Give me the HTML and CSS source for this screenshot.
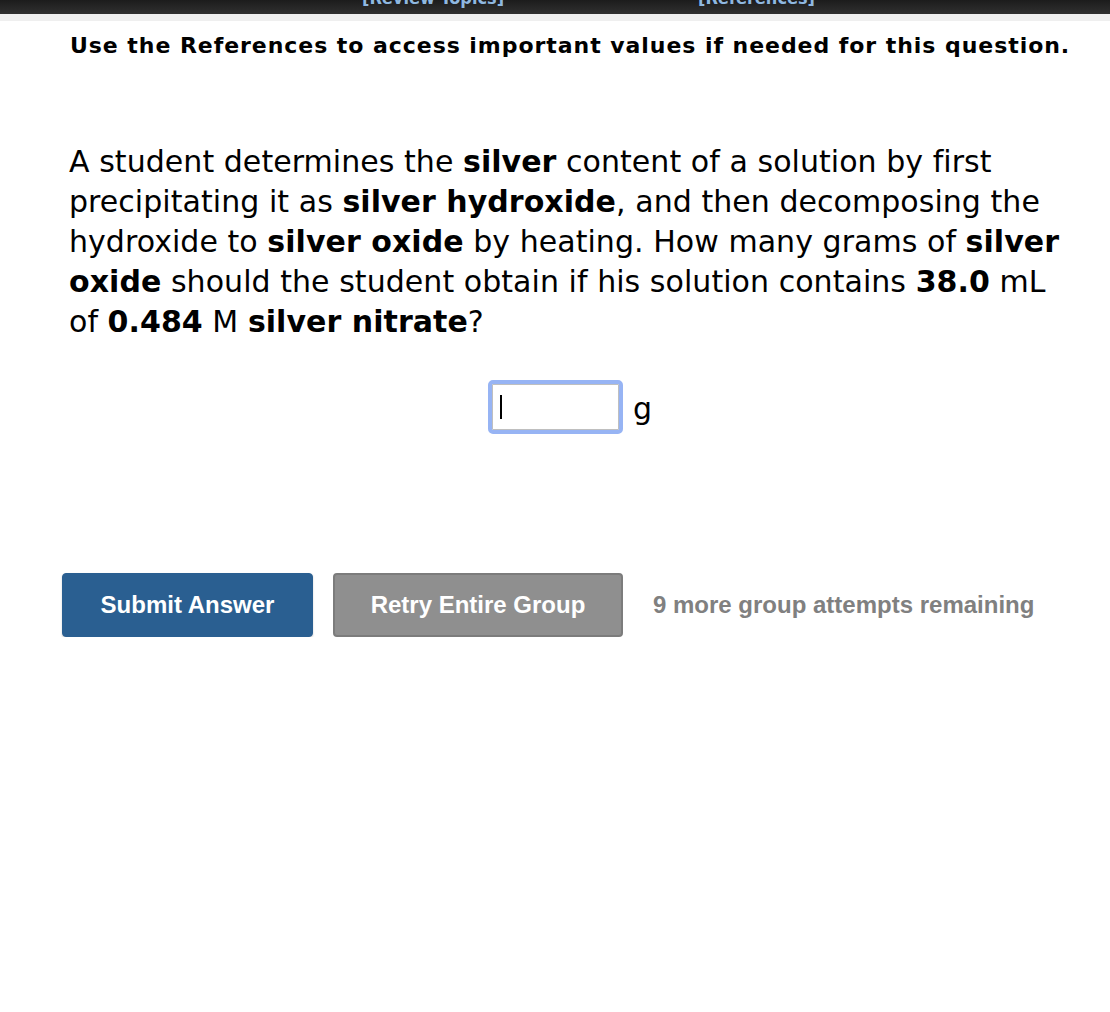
FILE: index.html
```html
<!DOCTYPE html>
<html>
<head>
<meta charset="utf-8">
<link rel="stylesheet" href="styles.css">
</head>
<body>
<div class="topbar">
  <span class="toplink link-review">[Review Topics]</span>
  <span class="toplink link-refs">[References]</span>
</div>
<div class="strip"></div>
<div class="content">
  <p class="note">Use the References to access important values if needed for this question.</p>
  <p class="question">A student determines the <b>silver</b> content of a solution by first<br>precipitating it as <b>silver hydroxide</b>, and then decomposing the<br>hydroxide to <b>silver oxide</b> by heating. How many grams of <b>silver</b><br><b>oxide</b> should the student obtain if his solution contains <b>38.0</b> mL<br>of <b>0.484</b> M <b>silver nitrate</b>?</p>
  <div class="answer">
    <div class="field"><span class="caret"></span></div>
    <span class="unit">g</span>
  </div>
  <div class="actions">
    <button class="btn btn-submit">Submit Answer</button>
    <button class="btn btn-retry">Retry Entire Group</button>
    <span class="remaining">9 more group attempts remaining</span>
  </div>
</div>
</body>
</html>
```

FILE: styles.css
```css
html, body {
  margin: 0;
  padding: 0;
  background: #ffffff;
}
.topbar {
  height: 14px;
  background: linear-gradient(#1c1c1c, #303030);
  overflow: hidden;
  position: relative;
}
.toplink {
  position: absolute;
  top: -13px;
  font-family: "DejaVu Sans Condensed", "DejaVu Sans", sans-serif;
  font-weight: bold;
  font-size: 18px;
  color: #8fb8e0;
}
.link-review { left: 362px; }
.link-refs { left: 698px; }
.strip {
  height: 7px;
  background: #efefef;
}
.content {
  padding: 0 0 0 69px;
}
.note {
  margin: 11px 0 0 1px;
  font-family: "DejaVu Sans", sans-serif;
  font-weight: bold;
  font-size: 22px;
  letter-spacing: 0.95px;
  line-height: 28px;
  color: #000;
  white-space: nowrap;
}
.question {
  margin: 82px 0 0 0;
  font-family: "DejaVu Sans", "Verdana", sans-serif;
  font-size: 30px;
  letter-spacing: 0.05px;
  line-height: 40px;
  color: #000;
  white-space: nowrap;
}
.answer {
  display: flex;
  align-items: center;
  margin: 38px 0 0 419px;
  gap: 10px;
}
.field {
  width: 119px;
  height: 46px;
  border: 4px solid #97b4f4;
  border-radius: 5px;
  background: #fff;
  box-shadow: inset 0 0 0 1px #bfbfbf;
  display: flex;
  align-items: center;
  padding-left: 8px;
  box-sizing: content-box;
}
.caret {
  display: block;
  width: 2px;
  height: 24px;
  background: #000;
}
.unit {
  font-family: "DejaVu Sans", sans-serif;
  font-size: 30px;
  color: #000;
  margin-top: 2px;
}
.actions {
  display: flex;
  align-items: center;
  margin: 139px 0 0 -7px;
}
.btn {
  font-family: "Liberation Sans", Arial, sans-serif;
  font-weight: bold;
  font-size: 24px;
  color: #fff;
  border-radius: 4px;
  height: 64px;
  padding: 0;
  cursor: pointer;
}
.btn-submit {
  width: 251px;
  background: #2a5f91;
  border: 1px solid #2a5f91;
  box-shadow: 0 1px 2px rgba(0,0,0,0.2);
}
.btn-retry {
  width: 290px;
  margin-left: 20px;
  background: #8f8f8f;
  border: 2px solid #7c7c7c;
}
.remaining {
  margin-left: 30px;
  font-family: "Liberation Sans", Arial, sans-serif;
  font-weight: bold;
  font-size: 24px;
  color: #808080;
}
```
